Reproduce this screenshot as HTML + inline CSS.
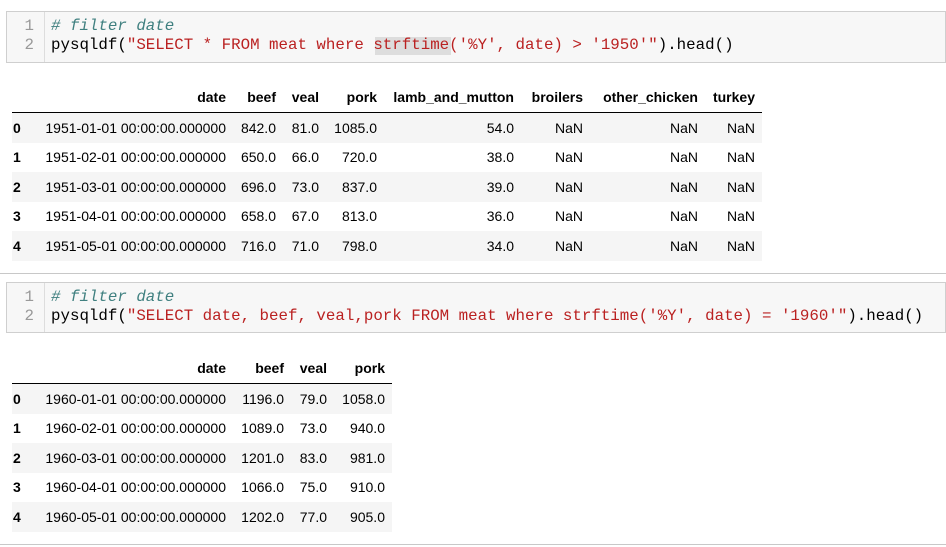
<!DOCTYPE html>
<html><head><meta charset="utf-8"><style>
body{margin:0;width:946px;height:547px;background:#fff;position:relative;overflow:hidden;font-family:"Liberation Sans",Arial,sans-serif;font-size:14px;color:#000}
.a{position:absolute;white-space:pre;line-height:16px}
.cell{position:absolute;left:6px;width:940px;background:#f7f7f7;border:1px solid #cfcfcf;box-sizing:border-box}
.gut{position:absolute;left:38px;width:1px;background:#ddd}
.m{font-family:"Liberation Mono","Courier New",monospace;font-size:15.8px;line-height:19px}
.ln{color:#999;text-align:right;width:20px;left:14px}
.c{color:#408080;font-style:italic}
.s{color:#ba2121}
.row{position:absolute;left:12px;height:29.5px;background:#f5f5f5}
.hl{position:absolute;background:#e8e8e8;border-top:1px solid #000}
.b{font-weight:bold}
.sep{position:absolute;left:0;width:946px;height:1px;background:#c8c8c8}
</style></head><body>
<div class="cell" style="top:11px;height:52px"></div>
<div class="gut" style="left:44px;top:12px;height:50px"></div>
<div class="a m ln" style="top:17px">1</div>
<div class="a m ln" style="top:36px">2</div>
<div class="a" style="left:375px;top:37px;width:76px;height:18px;background:#ddd"></div>
<div class="a m c" style="left:51px;top:17px"># filter date</div>
<div class="a m" style="left:51px;top:36px">pysqldf(<span class="s">"SELECT * FROM meat where strftime('%Y', date) &gt; '1950'"</span>).head()</div>

<div class="sep" style="top:273px"></div>
<div class="cell" style="top:282px;height:51px"></div>
<div class="gut" style="left:44px;top:283px;height:49px"></div>
<div class="a m ln" style="top:288px">1</div>
<div class="a m ln" style="top:307px">2</div>
<div class="a m c" style="left:51px;top:288px"># filter date</div>
<div class="a m" style="left:51px;top:307px">pysqldf(<span class="s">"SELECT date, beef, veal,pork FROM meat where strftime('%Y', date) = '1960'"</span>).head()</div>
<div class="sep" style="top:544px"></div>

<div id="t1"></div><div id="t2"></div>
<script>
function tbl(top,edges,width,head,rows){
 var h='';
 h+='<div class="a" style="left:12px;top:'+(top+15)+'px;width:'+width+'px;height:1px;background:#000"></div>';
 for(var i=0;i<head.length;i++) h+='<div class="a b" style="right:'+(946-edges[i])+'px;top:'+(top-8)+'px">'+head[i]+'</div>';
 for(var r=0;r<rows.length;r++){
  var y=top+16+29.5*r;
  if(r%2==0)h+='<div class="row" style="top:'+y+'px;width:'+width+'px"></div>';
  h+='<div class="a b" style="left:13px;top:'+(y+6.5)+'px">'+r+'</div>';
  for(var i=0;i<rows[r].length;i++) h+='<div class="a" style="right:'+(946-edges[i])+'px;top:'+(y+6.5)+'px">'+rows[r][i]+'</div>';
 }
 return h;
}
var e1=[226,276,319,377,514,583,698,755];
var d1=[["1951-01-01 00:00:00.000000","842.0","81.0","1085.0","54.0"],["1951-02-01 00:00:00.000000","650.0","66.0","720.0","38.0"],["1951-03-01 00:00:00.000000","696.0","73.0","837.0","39.0"],["1951-04-01 00:00:00.000000","658.0","67.0","813.0","36.0"],["1951-05-01 00:00:00.000000","716.0","71.0","798.0","34.0"]];
d1.forEach(function(r){r.push("NaN","NaN","NaN")});
document.getElementById('t1').innerHTML=tbl(97,e1,750,["date","beef","veal","pork","lamb_and_mutton","broilers","other_chicken","turkey"],d1);
var d2=[["1960-01-01 00:00:00.000000","1196.0","79.0","1058.0"],["1960-02-01 00:00:00.000000","1089.0","73.0","940.0"],["1960-03-01 00:00:00.000000","1201.0","83.0","981.0"],["1960-04-01 00:00:00.000000","1066.0","75.0","910.0"],["1960-05-01 00:00:00.000000","1202.0","77.0","905.0"]];
document.getElementById('t2').innerHTML=tbl(368,[226,284,327,385],380,["date","beef","veal","pork"],d2);
</script>
</body></html>
